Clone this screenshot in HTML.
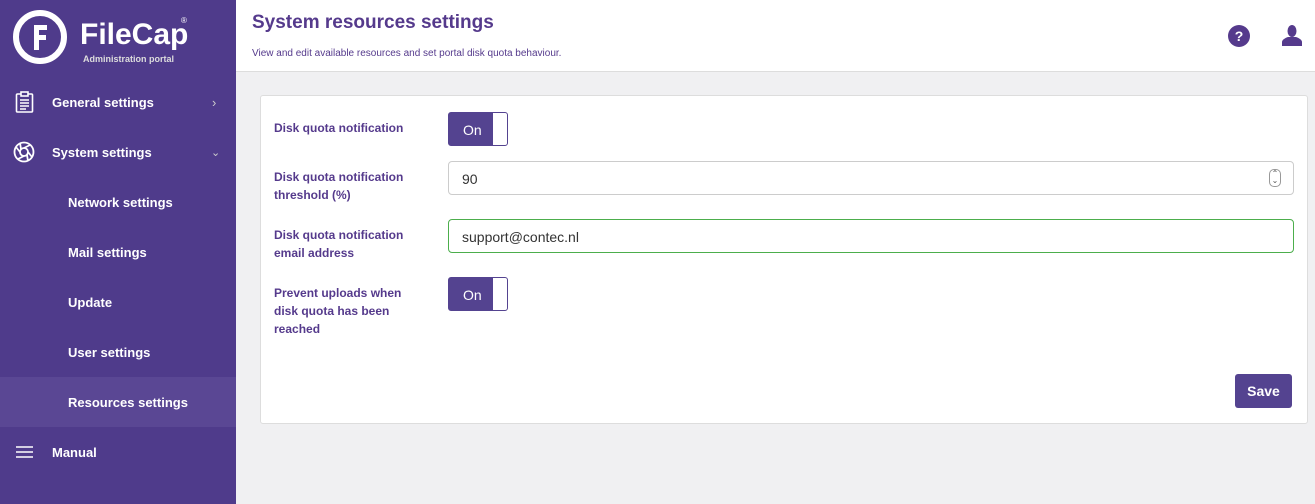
<!DOCTYPE html>
<html><head><meta charset="utf-8"><style>
*{box-sizing:border-box;margin:0;padding:0}
body{width:1315px;height:504px;overflow:hidden;font-family:"Liberation Sans",sans-serif;background:#f0f0f2;position:relative}
.side{position:absolute;left:0;top:0;width:236px;height:504px;background:#4f3b8b;color:#fff}
.item{position:absolute;left:0;width:236px;height:50px;font-weight:bold;font-size:13px;display:flex;align-items:center}
.item .t{position:absolute;left:52px}
.sub .t{left:68px}
.main-head{position:absolute;left:236px;top:0;right:0;height:72px;background:#fff;border-bottom:1px solid #ddd}
h1{position:absolute;left:16px;top:12px;font-size:19px;color:#553a8c;font-weight:bold}
.desc{position:absolute;left:16px;top:48px;font-size:10px;color:#553a8c}
.card{position:absolute;left:260px;top:95px;width:1048px;height:329px;background:#fff;border:1px solid #ddd;border-radius:3px}
.lbl{position:absolute;left:13px;font-size:12px;font-weight:bold;color:#553a8c;line-height:18px}
.tog{position:absolute;left:187px;width:60px;height:34px;background:#544390;border-radius:3px;border:1px solid #544390}
.tog span{position:absolute;left:14px;top:9px;color:#fff;font-size:14px}
.tog i{position:absolute;right:0;top:0;width:14px;height:32px;background:#fff;border-radius:0 2px 2px 0}
.inp{position:absolute;left:187px;width:846px;height:34px;border:1px solid #ccc;border-radius:4px;font-size:14px;color:#333;padding:9px 13px}
</style></head><body>
<div class="side">
  <svg style="position:absolute;left:12px;top:9px" width="56" height="56" viewBox="0 0 56 56"><circle cx="28" cy="28" r="24" fill="none" stroke="#fff" stroke-width="6"/><path d="M22 16h13v5h-8v5h7v5h-7v10h-5z" fill="#fff"/></svg>
  <div style="position:absolute;left:80px;top:18px;font-size:30px;font-weight:bold;letter-spacing:0px">FileCap</div>
  <div style="position:absolute;left:181px;top:16px;font-size:8px">®</div>
  <div style="position:absolute;left:83px;top:54px;font-size:9px;font-weight:bold;color:#ddd">Administration portal</div>
  <div class="item" style="top:77px"><svg style="position:absolute;left:15px" width="19" height="22" viewBox="0 0 19 22" fill="none" stroke="#fff" stroke-width="1.6"><rect x="1.5" y="3" width="16" height="18" rx="1"/><rect x="6" y="1" width="7" height="4" fill="#4f3b8b"/><path d="M5 9h9M5 12h9M5 15h9M5 18h6"/></svg><span class="t">General settings</span><span style="position:absolute;left:212px;font-weight:normal;color:#ccc">›</span></div>
  <div class="item" style="top:127px"><svg style="position:absolute;left:13px" width="22" height="22" viewBox="0 0 22 22" fill="none" stroke="#fff" stroke-width="1.8"><circle cx="11" cy="11" r="9.5"/><circle cx="11" cy="11" r="4"/><path d="M7 11l-4-5M11 7l6-3M15 11l4 5M11 15l-6 3M8 8l-1-6M14 14l1 6"/></svg><span class="t">System settings</span><span style="position:absolute;left:211px;font-weight:normal;color:#ccc;font-size:11px">⌄</span></div>
  <div class="item sub" style="top:177px"><span class="t">Network settings</span></div>
  <div class="item sub" style="top:227px"><span class="t">Mail settings</span></div>
  <div class="item sub" style="top:277px"><span class="t">Update</span></div>
  <div class="item sub" style="top:327px"><span class="t">User settings</span></div>
  <div class="item sub" style="top:377px;background:#5a4794"><span class="t">Resources settings</span></div>
  <div class="item" style="top:427px"><svg style="position:absolute;left:16px" width="17" height="14" viewBox="0 0 17 14" stroke="#fff" stroke-width="1.6"><path d="M0 2h17M0 7h17M0 12h17"/></svg><span class="t">Manual</span></div>
</div>
<div class="main-head">
  <h1>System resources settings</h1>
  <div class="desc">View and edit available resources and set portal disk quota behaviour.</div>
  <svg style="position:absolute;left:992px;top:25px" width="22" height="22" viewBox="0 0 22 22"><circle cx="11" cy="11" r="11" fill="#553a8c"/><text x="11" y="16" text-anchor="middle" fill="#fff" font-family="Liberation Sans" font-weight="bold" font-size="14">?</text></svg>
  <svg style="position:absolute;left:1046px;top:25px" width="20" height="21" viewBox="0 0 20 21" fill="#553a8c"><ellipse cx="10" cy="6" rx="4.5" ry="6"/><path d="M6 12h8c3 1 6 3 6 5v4H0v-4c0-2 3-4 6-5z"/></svg>
</div>
<div class="card">
  <div class="lbl" style="top:23px">Disk quota notification</div>
  <div class="tog" style="top:16px"><span>On</span><i></i></div>
  <div class="lbl" style="top:72px">Disk quota notification<br>threshold (%)</div>
  <div class="inp" style="top:65px">90<span style="position:absolute;right:12px;top:7px;width:12px;height:18px;border:1px solid #999;border-radius:5px;font-size:8px;line-height:7px;text-align:center;color:#555">⌃<br>⌄</span></div>
  <div class="lbl" style="top:130px">Disk quota notification<br>email address</div>
  <div class="inp" style="top:123px;border-color:#4cae4c">support@contec.nl</div>
  <div class="lbl" style="top:188px">Prevent uploads when<br>disk quota has been<br>reached</div>
  <div class="tog" style="top:181px"><span>On</span><i></i></div>
  <div style="position:absolute;left:974px;top:278px;width:57px;height:34px;background:#544390;border-radius:3px;color:#fff;font-weight:bold;font-size:14px;text-align:center;line-height:34px">Save</div>
</div>
</body></html>
